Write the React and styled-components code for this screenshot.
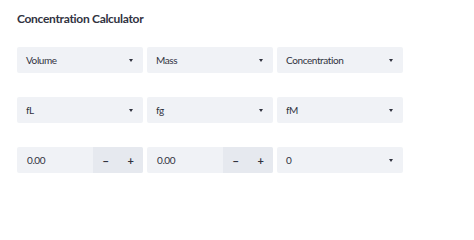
import React from 'react';
import styled, { createGlobalStyle } from 'styled-components';

const GlobalStyle = createGlobalStyle`
  body {
    margin: 0;
    background: #ffffff;
    font-family: Lato, "Noto Sans", sans-serif;
    font-variant-ligatures: none;
    color: #31333f;
  }
`;

const Page = styled.div`
  padding: 12px 17px;
`;

const Title = styled.h3`
  margin: 0 0 21px;
  font-size: 12px;
  font-weight: 700;
  line-height: 14px;
  letter-spacing: -0.3px;
  color: #31333f;
`;

const Grid = styled.div`
  display: grid;
  grid-template-columns: repeat(3, 126px);
  column-gap: 4px;
  row-gap: 24px;
`;

const Field = styled.div`
  height: 26px;
  display: flex;
  align-items: center;
  background: #f0f2f6;
  border-radius: 2px;
  font-size: 10px;
  letter-spacing: -0.4px;
  color: #31333f;
`;

const SelectBox = styled(Field)`
  padding: 0 10px 0 9px;
  justify-content: space-between;
`;

const Caret = styled.span`
  width: 0;
  height: 0;
  border-left: 2px solid transparent;
  border-right: 2px solid transparent;
  border-top: 3px solid #31333f;
`;

const NumberBox = styled(Field)`
  overflow: hidden;
`;

const NumberValue = styled.span`
  flex: 1;
  padding-left: 10px;
`;

const StepGroup = styled.div`
  width: 50px;
  height: 100%;
  display: flex;
  background: #e6e9ef;
`;

const StepButton = styled.span`
  flex: 1;
  display: flex;
  align-items: center;
  justify-content: center;
  font-size: 11px;
  font-weight: 700;
  color: #31333f;
`;

const Select = ({ value }) => (
  <SelectBox>
    <span>{value}</span>
    <Caret />
  </SelectBox>
);

const NumberInput = ({ value }) => (
  <NumberBox>
    <NumberValue>{value}</NumberValue>
    <StepGroup>
      <StepButton>−</StepButton>
      <StepButton>+</StepButton>
    </StepGroup>
  </NumberBox>
);

export default function App() {
  return (
    <>
      <GlobalStyle />
      <Page>
        <Title>Concentration Calculator</Title>
        <Grid>
          <Select value="Volume" />
          <Select value="Mass" />
          <Select value="Concentration" />
          <Select value="fL" />
          <Select value="fg" />
          <Select value="fM" />
          <NumberInput value="0.00" />
          <NumberInput value="0.00" />
          <Select value="0" />
        </Grid>
      </Page>
    </>
  );
}
